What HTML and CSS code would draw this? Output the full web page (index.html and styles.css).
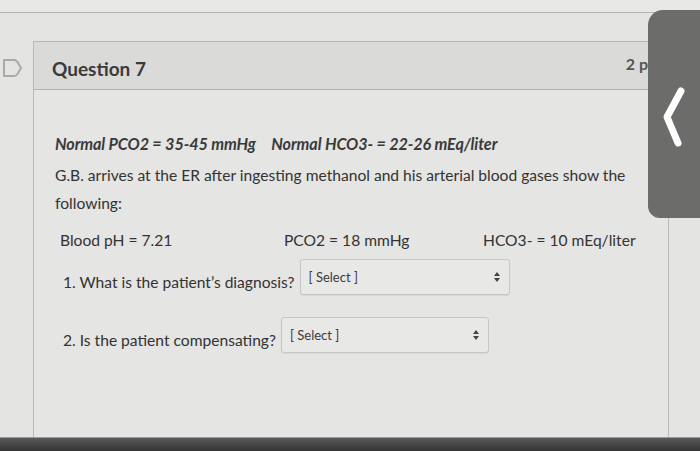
FILE: index.html
```html
<!DOCTYPE html>
<html lang="en">
<head>
    <meta charset="UTF-8">
    <meta name="viewport" content="width=device-width, initial-scale=1.0">
    <title>Question 7</title>
    <link rel="stylesheet" href="styles.css">
</head>
<body>
    <div class="screen">
        <div class="top-strip"></div>

        <div class="question-wrap">
            <svg class="flag" width="22" height="22" viewBox="0 0 22 22">
                <path d="M3 3 H13 Q15 3 16.5 5 L20 11 L16.5 17 Q15 19 13 19 H3 Z" fill="none" stroke="#a9a9a7" stroke-width="2" stroke-linejoin="round"/>
            </svg>

            <div class="card">
                <div class="card-head">
                    <span class="title">Question 7</span>
                    <span class="pts">2 pts</span>
                </div>
                <div class="card-body">
                    <p class="normals">Normal PCO2 = 35-45 mmHg <span class="gap"></span>Normal HCO3- = 22-26 mEq/liter</p>
                    <p class="story">G.B. arrives at the ER after ingesting methanol and his arterial blood gases show the following:</p>
                    <div class="labs">
                        <span class="lab lab-ph">Blood pH = 7.21</span>
                        <span class="lab lab-pco">PCO2 = 18 mmHg</span>
                        <span class="lab">HCO3- = 10 mEq/liter</span>
                    </div>
                    <div class="ask ask-1">
                        <span>1. What is the patient’s diagnosis?</span>
                        <div class="select"><span>[ Select ]</span><i class="arrows"></i></div>
                    </div>
                    <div class="ask ask-2">
                        <span>2. Is the patient compensating?</span>
                        <div class="select"><span>[ Select ]</span><i class="arrows"></i></div>
                    </div>
                </div>
            </div>
        </div>

        <!-- side tab of the phone browser -->
        <div class="side-tab">
            <svg width="30" height="64" viewBox="0 0 30 64">
                <path d="M19 5 L5 31 L16 57" fill="none" stroke="#fff" stroke-width="7" stroke-linecap="round" stroke-linejoin="round"/>
            </svg>
        </div>
    </div>
    <div class="bezel"></div>
</body>
</html>
```

FILE: styles.css
```css
*{margin:0;padding:0;box-sizing:border-box;}
body{
    background:#e3e3e1;
    font-family:Lato,"Open Sans",sans-serif;
    color:#333;
    overflow:hidden;
}
.screen{
    position:relative;
    height:437px;
    overflow:hidden;
    background:#e4e4e2;
}
.top-strip{
    height:13px;
    background:#e8e8e6;
    border-bottom:1px solid #b4b4b2;
}
.question-wrap{
    display:flex;
    align-items:flex-start;
    margin-top:28px;
}
.flag{margin:16px 0 0 1px;flex:none;}
.card{
    margin-left:10px;
    width:636px;
    height:420px;
    border:1px solid #b9b9b7;
    background:#e5e5e3;
}
.card-head{
    height:48px;
    display:flex;
    align-items:center;
    justify-content:space-between;
    padding:5px 7px 0 18px;
    background:#dadad8;
    border-bottom:1px solid #b2b2b0;
}
.title{font-size:19px;font-weight:700;color:#3a3a3a;}
.pts{font-size:16px;font-weight:700;color:#555;margin-top:-10px;}
.card-body{padding:44px 20px 0 21px;font-size:15.6px;line-height:19px;}
.normals{font-style:italic;font-weight:700;color:#3a3a3a;font-size:16.2px;letter-spacing:-0.1px;}
.gap{display:inline-block;width:12px;}
.story{margin-top:8px;line-height:28px;width:600px;}
.labs{display:flex;margin-top:14px;padding-left:5px;}
.lab-ph{width:224px;}
.lab-pco{width:199px;}
.ask{display:flex;align-items:flex-end;padding-left:8px;}
.ask > span{white-space:nowrap;padding-bottom:3px;}
.ask-1{margin-top:9px;}
.ask-2{margin-top:22px;}
.select{
    display:flex;
    justify-content:space-between;
    align-items:center;
    width:210px;
    height:36px;
    margin-left:5px;
    padding:0 9px 0 8px;
    background:#e8e8e6;
    border:1px solid #c6c6c4;
    border-radius:3px;
    box-shadow:0 1px 1px rgba(0,0,0,0.06);
}
.ask-2 .select{width:208px;}
.select span{font-size:13px;color:#3a3a3a;}
.arrows{
    position:relative;
    width:6px;
    height:10px;
}
.arrows::before,.arrows::after{
    content:"";
    position:absolute;
    left:0;
    border-left:3px solid transparent;
    border-right:3px solid transparent;
}
.arrows::before{top:0;border-bottom:4px solid #444;}
.arrows::after{bottom:0;border-top:4px solid #444;}
.side-tab{
    position:absolute;
    left:648px;
    top:10px;
    width:60px;
    height:208px;
    background:#6c6c6b;
    border-radius:15px 0 0 12px;
    padding:76px 0 0 14px;
}
.bezel{
    height:14px;
    background:linear-gradient(#5a5a5a,#333);
    border-top:1px solid #9a9a98;
}
```
